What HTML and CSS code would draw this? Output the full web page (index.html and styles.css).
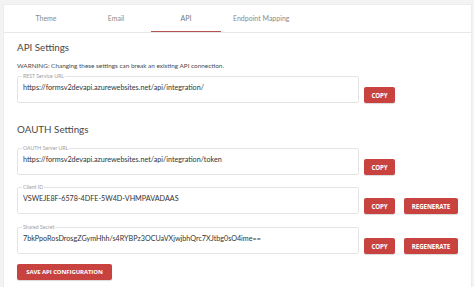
FILE: index.html
```html
<!DOCTYPE html>
<html>
<head>
<meta charset="utf-8">
<link rel="stylesheet" href="styles.css">
</head>
<body>
<div class="card">
  <nav class="tabs">
    <div class="tab">Theme</div>
    <div class="tab">Email</div>
    <div class="tab active">API</div>
    <div class="tab wide">Endpoint Mapping</div>
  </nav>
  <div class="content">
    <h2 class="h2 first">API Settings</h2>
    <p class="warn">WARNING: Changing these settings can break an existing API connection.</p>
    <div class="row">
      <fieldset class="field"><legend>REST Service URL</legend><div class="val">https://formsv2devapi.azurewebsites.net/api/integration/</div></fieldset>
      <button class="btn">COPY</button>
    </div>
    <h2 class="h2">OAUTH Settings</h2>
    <div class="row">
      <fieldset class="field"><legend>OAUTH Server URL</legend><div class="val">https://formsv2devapi.azurewebsites.net/api/integration/token</div></fieldset>
      <button class="btn">COPY</button>
    </div>
    <div class="row">
      <fieldset class="field"><legend>Client ID</legend><div class="val">VSWEJE8F-6578-4DFE-5W4D-VHMPAVADAAS</div></fieldset>
      <button class="btn">COPY</button>
      <button class="btn regen">REGENERATE</button>
    </div>
    <div class="row">
      <fieldset class="field"><legend>Shared Secret</legend><div class="val">7bkPpoRosDrosgZGymHhh/s4RYBPz3OCUaVXjwjbhQrc7XJtbg0sO4ime==</div></fieldset>
      <button class="btn">COPY</button>
      <button class="btn regen">REGENERATE</button>
    </div>
    <button class="btn save">SAVE API CONFIGURATION</button>
  </div>
</div>
</body>
</html>
```

FILE: styles.css
```css
html, body {
  margin: 0;
  padding: 0;
}
body {
  background: #f3f3f3;
  padding: 4px 2px 0 3px;
  width: 474px;
  height: 287px;
  box-sizing: border-box;
  overflow: hidden;
  font-family: "Lato", "Liberation Sans", sans-serif;
  color: #444;
}
.card {
  background: #fff;
  border: 1px solid #ececec;
  height: 290px;
}
.tabs {
  display: flex;
  padding-left: 7px;
  height: 27px;
  border-bottom: 1px solid #e8e8e8;
}
.tab {
  width: 70px;
  text-align: center;
  font-size: 7px;
  color: #8a8a8a;
  line-height: 27px;
  box-sizing: border-box;
}
.tab.wide {
  width: auto;
  padding: 0 12px;
  text-align: left;
}
.tab.active {
  border-bottom: 1px solid #b4524e;
  color: #777;
}
.content {
  padding: 0 13px;
}
.h2 {
  font-size: 9.8px;
  font-weight: 400;
  color: #484848;
  margin: 0;
  line-height: 14px;
  padding-top: 19px;
}
.h2.first {
  padding-top: 7px;
}
.warn {
  font-size: 6.4px;
  margin: 0;
  margin-top: 7px;
  color: #4a4a4a;
  line-height: 9px;
}
.row {
  display: flex;
  align-items: flex-end;
  margin-top: 3px;
}
.h2 + .row {
  margin-top: 9px;
}
.row + .row {
  margin-top: 9px;
}
.row + .row + .row {
  margin-top: 10px;
}
.field {
  width: 342px;
  box-sizing: border-box;
  margin: 0;
  padding: 0 5px;
  border: 1px solid #e4e4e4;
  border-radius: 2px;
  height: 30px;
  min-width: 0;
}
.field legend {
  font-size: 5.2px;
  color: #a0a0a0;
  padding: 0 1px;
  margin-left: -1px;
  line-height: 6px;
}
.val {
  font-size: 7.2px;
  color: #333;
  line-height: 9px;
  margin-top: 4px;
  white-space: nowrap;
  overflow: hidden;
}
.btn {
  background: #c8433f;
  color: #fff;
  border: none;
  border-radius: 2px;
  font-family: "Open Sans", "Liberation Sans", sans-serif;
  font-weight: 700;
  font-size: 6.2px;
  height: 16px;
  width: 31px;
  padding: 0;
  margin-left: 5px;
  margin-bottom: 0;
  letter-spacing: -0.1px;
  box-shadow: 0 1px 1px rgba(0,0,0,0.15);
}
.btn.regen {
  width: 54px;
  margin-left: 9px;
}
.btn.save {
  margin: 10px 0 0;
  width: 95px;
  height: 16px;
  font-size: 6px;
}
```
